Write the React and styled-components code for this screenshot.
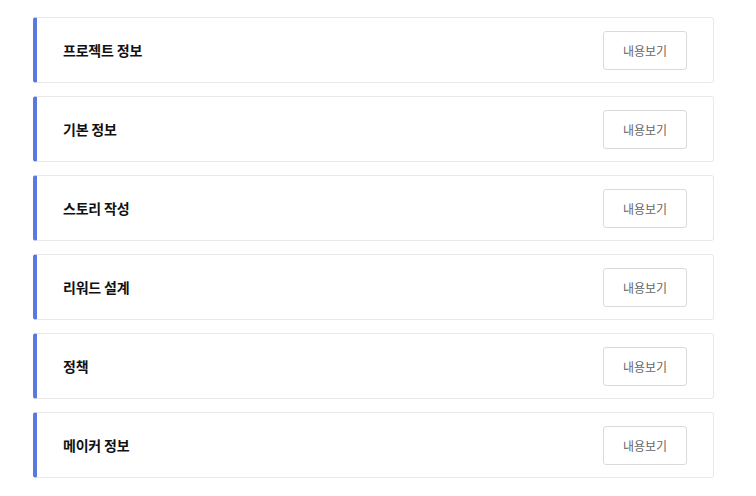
import styled, { createGlobalStyle } from 'styled-components';

const sections = [
  { id: 1, title: '프로젝트 정보' },
  { id: 2, title: '기본 정보' },
  { id: 3, title: '스토리 작성' },
  { id: 4, title: '리워드 설계' },
  { id: 5, title: '정책' },
  { id: 6, title: '메이커 정보' },
];

const GlobalStyle = createGlobalStyle`
  html, body {
    margin: 0;
    padding: 0;
    background: #fff;
  }
  body {
    font-family: "Noto Sans CJK KR", "Noto Sans", sans-serif;
  }
`;

function App() {
  return (
    <>
      <GlobalStyle />
      <Page>
        <List>
          {sections.map((section) => (
            <Card key={section.id}>
              <Title>{section.title}</Title>
              <ViewButton type="button">내용보기</ViewButton>
            </Card>
          ))}
        </List>
      </Page>
    </>
  );
}

export default App;

const Page = styled.div`
  padding: 17px 42px 0 33px;
  width: 756px;
  box-sizing: border-box;
`;
const List = styled.div`
  display: flex;
  flex-direction: column;
  gap: 13px;
`;
const Card = styled.div`
  height: 66px;
  box-sizing: border-box;
  padding: 0 26px;
  display: flex;
  align-items: center;
  justify-content: space-between;
  border: 1px solid #e9e9e9;
  border-left: 4px solid #5b78e0;
  border-radius: 3px;
  background: #fff;
`;
const Title = styled.h3`
  margin: 0;
  font-size: 14px;
  font-weight: 700;
  color: #111;
  letter-spacing: -0.2px;
`;
const ViewButton = styled.button`
  width: 84px;
  height: 39px;
  border: 1px solid #dadada;
  border-radius: 3px;
  background: #fff;
  color: #666;
  font-family: "Noto Sans CJK KR", "Noto Sans", sans-serif;
  font-size: 12px;
  cursor: pointer;
`;
